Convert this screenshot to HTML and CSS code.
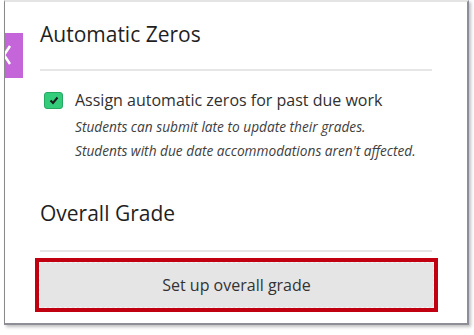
FILE: index.html
```html
<!DOCTYPE html>
<html>
<head>
<meta charset="utf-8">
<link rel="stylesheet" href="styles.css">
</head>
<body>
<div class="panel">
  <div class="tab">
    <svg width="18" height="45" viewBox="0 0 18 45"><polyline points="5,13 -1,22 5,31" fill="none" stroke="#fff" stroke-width="2.5"/></svg>
  </div>
  <section class="group">
    <h2 class="title">Automatic Zeros</h2>
    <hr class="rule">
    <div class="option">
      <span class="check">
        <svg width="10" height="9" viewBox="0 0 10 9"><polyline points="1.5,4.5 4,7 8.5,1.5" fill="none" stroke="#1b1b1b" stroke-width="2"/></svg>
      </span>
      <div class="option-text">
        <div class="label">Assign automatic zeros for past due work</div>
        <p class="hint first">Students can submit late to update their grades.</p>
        <p class="hint">Students with due date accommodations aren't affected.</p>
      </div>
    </div>
  </section>
  <section class="group second">
    <h2 class="title">Overall Grade</h2>
    <hr class="rule rule2">
    <div class="highlight"><button class="btn">Set up overall grade</button></div>
  </section>
</div>
</body>
</html>
```
FILE: styles.css
```css
html, body { margin: 0; padding: 0; background: #fff; }
body { width: 474px; height: 335px; overflow: hidden; font-family: "Open Sans", "Liberation Sans", sans-serif; color: #2b2b2b; }
.panel {
  position: relative;
  box-sizing: border-box;
  margin-left: 4px;
  width: 465px;
  border-top: 2px solid #e4e4e4;
  border-left: 1px solid #8a8a8a;
  border-right: 2px solid #8c8c9a;
  border-bottom: 2px solid #8e8e96;
  box-shadow: 2px 2px 3px rgba(0,0,0,0.25);
  padding: 17px 35px 11px 35px;
  background: #fff;
}
.tab {
  position: absolute;
  left: 0; top: 31px;
  width: 18px; height: 45px;
  background: #c466da;
}
.tab svg { display: block; }
.title { margin: 0; font-size: 21px; line-height: 30px; font-weight: 400; color: #1f1f1f; }
.rule { margin: 20px 0 0; border: 0; height: 2px; background: #e6e6e6; }
.rule2 { margin-top: 22px; }
.option { display: flex; margin-top: 19px; padding-left: 4px; }
.check {
  box-sizing: border-box;
  width: 19px; height: 17px;
  margin-top: 2px;
  border-radius: 3px;
  background: #33cc7a;
  border: 1px solid #26a862;
  display: flex; align-items: center; justify-content: center;
  flex: none;
}
.option-text { margin-left: 12px; }
.label { font-size: 16px; line-height: 20px; color: #303030; }
.hint { margin: 0; font-size: 13.7px; line-height: 24px; font-style: italic; color: #404040; }
.hint.first { margin-top: 5px; }
.second { margin-top: 35px; }
.highlight {
  margin: 6px -6px 0 -5px;
  border: 4px solid #c00010;
  height: 46px;
  display: flex;
}
.btn {
  flex: 1;
  margin: 0;
  border: 1px dashed #f4f4f4;
  background: #e5e5e5;
  font-family: "Open Sans", "Liberation Sans", sans-serif;
  font-size: 16px;
  color: #333;
  padding: 0;
}
```
